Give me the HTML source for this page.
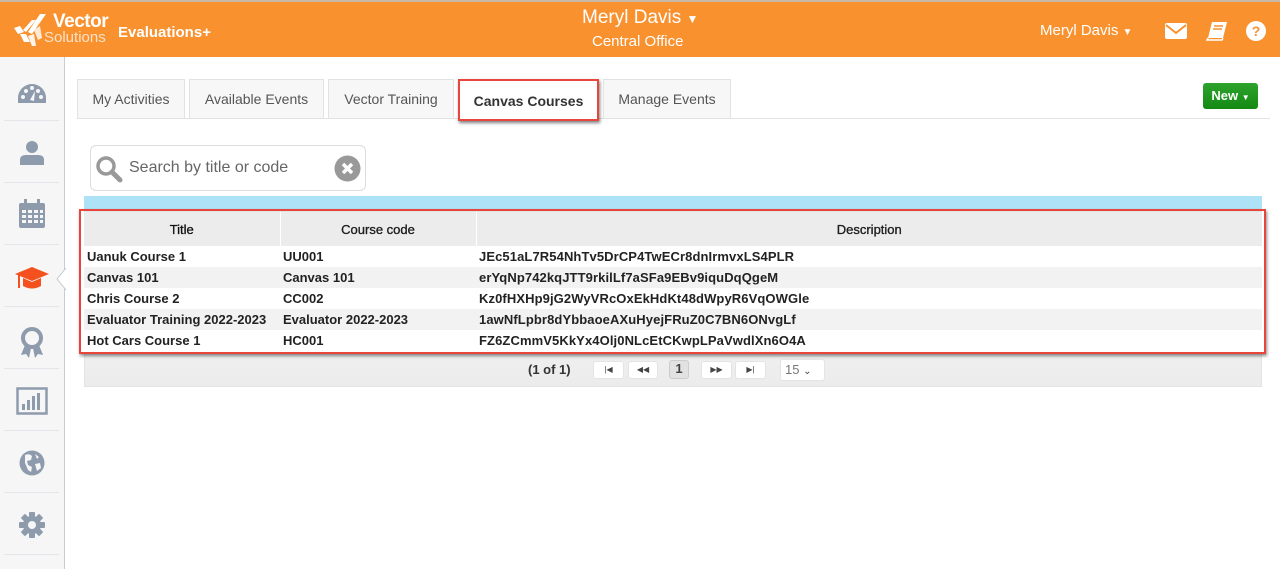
<!DOCTYPE html>
<html><head><meta charset="utf-8"><style>
*{box-sizing:border-box;margin:0;padding:0}
body{width:1280px;height:569px;overflow:hidden;background:#fff;font-family:"Liberation Sans",Arial,sans-serif;position:relative}
.hdr{position:absolute;left:0;top:0;width:1280px;height:57px;background:#f8912e;border-top:2px solid #c9b8a6;color:#fff}
.abs{position:absolute}
.side{position:absolute;left:0;top:57px;width:65px;height:512px;background:#f6f6f6;border-right:1px solid #c8cdd3}
.sep{position:absolute;left:4px;width:55px;height:1px;background:#e2e5ea}
.tab{position:absolute;top:79px;height:39px;border:1px solid #e2e2e2;border-bottom:none;background:#f7f7f7;color:#555;font-size:14px;text-align:center;line-height:38px}
table{border-collapse:collapse}
td{font-size:13px;font-weight:bold;color:#222;height:21px;padding-left:3px}
.pb{position:absolute;top:361px;height:18px;background:#fff;border:1px solid #e4e4e4;border-radius:3px;font-size:8px;color:#444;text-align:center;line-height:16px}
</style></head><body>
<div class="hdr">
 <svg class="abs" style="left:12px;top:10px" width="42" height="36" viewBox="0 0 42 36"><g fill="#fff"><path d="M28 2 L34 2 L20 22 L16 20Z"/><path d="M20 8 L24 8 L14 20 L11 18Z"/><path d="M2 16 L8 14 L12 20 L6 22Z"/><path d="M8 22 L14 22 L18 30 L12 30Z"/><path d="M16 24 L22 22 L24 34 L20 34Z" opacity=".9"/><path d="M22 18 L28 14 L30 26 L26 28Z" opacity=".8"/></g></svg>
 <div class="abs" style="left:53px;top:9px;font-size:19px;font-weight:bold;letter-spacing:-0.5px">Vector</div>
 <div class="abs" style="left:44px;top:27px;font-size:15px;font-weight:300;color:#fde2c8">Solutions</div>
 <div class="abs" style="left:118px;top:22px;font-size:15px;font-weight:bold">Evaluations+</div>
 <div class="abs" style="left:582px;top:5px;font-size:19px">Meryl Davis <span style="font-size:12px">▼</span></div>
 <div class="abs" style="left:592px;top:31px;font-size:15px">Central Office</div>
 <div class="abs" style="left:1040px;top:20px;font-size:15px">Meryl Davis <span style="font-size:10px">▼</span></div>
 <svg class="abs" style="left:1165px;top:21px" width="22" height="16" viewBox="0 0 22 16"><rect width="22" height="16" rx="2" fill="#fff"/><path d="M1 2 L11 10 L21 2" stroke="#f8912e" stroke-width="2" fill="none"/></svg>
 <svg class="abs" style="left:1206px;top:19px" width="22" height="20" viewBox="0 0 22 20"><path d="M6 1 H21 L17 17 H2 Z" fill="#fff"/><path d="M2 17 L1 19 H16 L17 17" stroke="#fff" stroke-width="1.5" fill="none"/><path d="M8 5 H17 M7 8 H16" stroke="#f8912e" stroke-width="1.5"/></svg>
 <svg class="abs" style="left:1246px;top:19px" width="20" height="20" viewBox="0 0 20 20"><circle cx="10" cy="10" r="10" fill="#fff"/><text x="10" y="15" text-anchor="middle" font-size="14" font-weight="bold" fill="#f8912e" font-family="Liberation Sans">?</text></svg>
</div>
<div class="side">
 <div class="sep" style="top:63px"></div><div class="sep" style="top:125px"></div><div class="sep" style="top:187px"></div><div class="sep" style="top:249px"></div><div class="sep" style="top:311px"></div><div class="sep" style="top:373px"></div><div class="sep" style="top:435px"></div><div class="sep" style="top:497px"></div>
 <svg class="abs" style="left:17px;top:26px" width="30" height="22" viewBox="0 0 30 22"><path d="M15 1 A14 14 0 0 1 29 15 L29 20 H1 V15 A14 14 0 0 1 15 1Z" fill="#8e9bad"/><g fill="#f6f6f6"><circle cx="6" cy="14" r="2"/><circle cx="9" cy="8" r="2"/><circle cx="15" cy="5" r="2"/><circle cx="21" cy="8" r="2"/><circle cx="24" cy="14" r="2"/><path d="M13 17 L18 8 L17 18Z"/></g></svg>
 <svg class="abs" style="left:19px;top:83px" width="26" height="26" viewBox="0 0 26 26"><circle cx="13" cy="7" r="6" fill="#8e9bad"/><path d="M1 25 V20 Q1 15 7 15 H19 Q25 15 25 20 V25Z" fill="#8e9bad"/></svg>
 <svg class="abs" style="left:18px;top:142px" width="28" height="30" viewBox="0 0 28 30"><rect x="1" y="4" width="26" height="25" rx="2" fill="#8e9bad"/><rect x="6" y="0" width="3" height="7" fill="#8e9bad"/><rect x="19" y="0" width="3" height="7" fill="#8e9bad"/><g fill="#f6f6f6"><rect x="4" y="11" width="4" height="3"/><rect x="10" y="11" width="4" height="3"/><rect x="16" y="11" width="4" height="3"/><rect x="22" y="11" width="3" height="3"/><rect x="4" y="16" width="4" height="3"/><rect x="10" y="16" width="4" height="3"/><rect x="16" y="16" width="4" height="3"/><rect x="22" y="16" width="3" height="3"/><rect x="4" y="21" width="4" height="3"/><rect x="10" y="21" width="4" height="3"/><rect x="16" y="21" width="4" height="3"/><rect x="22" y="21" width="3" height="3"/></g></svg>
 <svg class="abs" style="left:14px;top:209px" width="36" height="26" viewBox="0 0 36 26"><path d="M18 1 L35 8 L18 15 L1 8Z" fill="#f4511e"/><path d="M9 12 V20 Q18 25 27 20 V12 L18 16Z" fill="#f4511e"/><rect x="4" y="9" width="2" height="13" fill="#f4511e"/></svg>
 <svg class="abs" style="left:20px;top:270px" width="24" height="32" viewBox="0 0 24 32"><circle cx="12" cy="11" r="9" fill="none" stroke="#8e9bad" stroke-width="4"/><path d="M5 18 L1 28 L6 27 L9 31 L11 21Z M19 18 L23 28 L18 27 L15 31 L13 21Z" fill="#8e9bad"/></svg>
 <svg class="abs" style="left:16px;top:330px" width="32" height="28" viewBox="0 0 32 28"><rect x="1.5" y="1.5" width="29" height="25" fill="none" stroke="#8e9bad" stroke-width="2.5"/><rect x="6" y="17" width="3" height="6" fill="#8e9bad"/><rect x="11" y="13" width="3" height="10" fill="#8e9bad"/><rect x="16" y="9" width="3" height="14" fill="#8e9bad"/><rect x="21" y="6" width="3" height="17" fill="#8e9bad"/></svg>
 <svg class="abs" style="left:19px;top:393px" width="26" height="26" viewBox="0 0 26 26"><circle cx="13" cy="13" r="12.5" fill="#8e9bad"/><path d="M6 5 Q10 3 13 6 L12 10 L8 11 L9 15 L13 17 L12 22 L9 20 L6 13Z M16 4 L20 7 L18 9Z M16 14 L21 13 L22 18 L18 21Z" fill="#f6f6f6"/></svg>
 <svg class="abs" style="left:19px;top:455px" width="26" height="26" viewBox="0 0 26 26"><g fill="#8e9bad"><circle cx="13" cy="13" r="9"/><rect x="10" y="0" width="6" height="26" rx="1"/><rect x="0" y="10" width="26" height="6" rx="1"/><rect x="10" y="0" width="6" height="26" rx="1" transform="rotate(45 13 13)"/><rect x="10" y="0" width="6" height="26" rx="1" transform="rotate(-45 13 13)"/></g><circle cx="13" cy="13" r="4" fill="#f6f6f6"/></svg>
 <svg class="abs" style="left:56px;top:211px" width="11" height="22" viewBox="0 0 11 22"><path d="M10 0 L1 11 L10 22" fill="#fff" stroke="#c8cdd3"/></svg>
</div>
<div class="abs" style="left:77px;top:118px;width:1193px;height:1px;background:#e2e2e2"></div>
<div class="tab" style="left:77px;width:108px">My Activities</div>
<div class="tab" style="left:189px;width:135px">Available Events</div>
<div class="tab" style="left:328px;width:126px">Vector Training</div>
<div class="tab" style="left:458px;width:141px;background:#fff;border:2px solid #e8453c;height:42px;font-weight:bold;color:#333;box-shadow:1px 2px 3px rgba(0,0,0,.5);line-height:40px">Canvas Courses</div>
<div class="tab" style="left:603px;width:128px">Manage Events</div>
<div class="abs" style="left:1203px;top:83px;width:55px;height:26px;background:linear-gradient(#2ea32e,#138a13);border-radius:3px;color:#fff;font-size:13px;font-weight:bold;line-height:26px;text-align:center">New <span style="font-size:8px">▼</span></div>
<div class="abs" style="left:90px;top:145px;width:276px;height:46px;border:1px solid #ddd;border-radius:6px"></div>
<svg class="abs" style="left:95px;top:155px" width="28" height="28" viewBox="0 0 28 28"><circle cx="11" cy="11" r="8" fill="none" stroke="#999" stroke-width="3.5"/><path d="M17 17 L25 25" stroke="#999" stroke-width="5" stroke-linecap="round"/></svg>
<div class="abs" style="left:129px;top:159px;font-size:16px;color:#666">Search by title or code</div>
<svg class="abs" style="left:334px;top:155px" width="27" height="27" viewBox="0 0 27 27"><circle cx="13.5" cy="13.5" r="13" fill="#999"/><path d="M9 9 L18 18 M18 9 L9 18" stroke="#fff" stroke-width="3.5"/></svg>
<div class="abs" style="left:84px;top:196px;width:1178px;height:15px;background:#aee3f7"></div>
<div class="abs" style="left:84px;top:211px;width:1178px;height:176px;background:linear-gradient(#f9f9f9,#ececec);border:1px solid #e3e3e3"></div>
<div class="abs" style="left:84px;top:212px;width:1178px;height:141px;background:#fff">
<table style="width:1178px">
<tr style="background:#ececec"><td style="height:34px;width:196px;text-align:center;font-weight:normal;color:#111;font-size:13px;padding:0;-webkit-text-stroke:0.3px #111">Title</td><td style="width:196px;text-align:center;font-weight:normal;padding:0;border-left:1px solid #fff;-webkit-text-stroke:0.3px #111">Course code</td><td style="text-align:center;font-weight:normal;padding:0;border-left:1px solid #fff;-webkit-text-stroke:0.3px #111">Description</td></tr>
<tr><td>Uanuk Course 1</td><td>UU001</td><td style="letter-spacing:0.1px">JEc51aL7R54NhTv5DrCP4TwECr8dnIrmvxLS4PLR</td></tr>
<tr style="background:#f2f2f2"><td>Canvas 101</td><td>Canvas 101</td><td style="letter-spacing:0.1px">erYqNp742kqJTT9rkilLf7aSFa9EBv9iquDqQgeM</td></tr>
<tr><td>Chris Course 2</td><td>CC002</td><td style="letter-spacing:0.1px">Kz0fHXHp9jG2WyVRcOxEkHdKt48dWpyR6VqOWGle</td></tr>
<tr style="background:#f2f2f2"><td>Evaluator Training 2022-2023</td><td>Evaluator 2022-2023</td><td style="letter-spacing:0.1px">1awNfLpbr8dYbbaoeAXuHyejFRuZ0C7BN6ONvgLf</td></tr>
<tr><td>Hot Cars Course 1</td><td>HC001</td><td style="letter-spacing:0.1px">FZ6ZCmmV5KkYx4Olj0NLcEtCKwpLPaVwdlXn6O4A</td></tr>
</table></div>
<div class="abs" style="left:79px;top:209px;width:1187px;height:145px;border:2px solid #e8453c;box-shadow:1px 2px 3px rgba(0,0,0,.45)"></div>
<div class="abs" style="left:528px;top:362px;font-size:13px;font-weight:bold;color:#333">(1 of 1)</div>
<div class="pb" style="left:593px;width:31px">|◀</div>
<div class="pb" style="left:628px;width:30px">◀◀</div>
<div class="pb" style="left:669px;width:20px;background:#e2e2e2;border-color:#ccc;font-size:13px;font-weight:bold;top:360px;height:19px">1</div>
<div class="pb" style="left:701px;width:31px">▶▶</div>
<div class="pb" style="left:735px;width:31px">▶|</div>
<div class="pb" style="left:780px;width:45px;height:22px;top:359px;font-size:13px;line-height:20px;color:#777;text-align:left;padding-left:4px">15 <span style="font-size:10px;color:#444">&#8964;</span></div>
</body></html>
